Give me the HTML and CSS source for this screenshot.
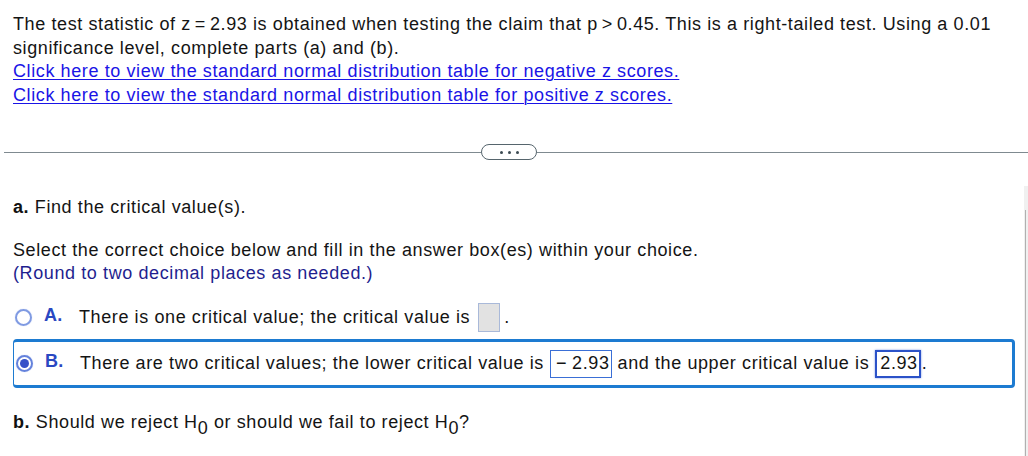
FILE: index.html
```html
<!DOCTYPE html>
<html>
<head>
<meta charset="utf-8">
<link rel="stylesheet" href="styles.css">
</head>
<body>
<div class="page">
  <div class="intro">
    <div class="line">The test statistic of z<span class="op">=</span>2.93 is obtained when testing the claim that p<span class="op">&gt;</span>0.45. This is a right-tailed test. Using a 0.01</div>
    <div class="line">significance level, complete parts (a) and (b).</div>
    <div class="line"><a class="link" href="#">Click here to view the standard normal distribution table for negative z scores.</a></div>
    <div class="line"><a class="link" href="#">Click here to view the standard normal distribution table for positive z scores.</a></div>
  </div>
  <div class="divider">
    <div class="rule rule-left"></div>
    <div class="more"><span class="dot"></span><span class="dot"></span><span class="dot"></span></div>
    <div class="rule rule-right"></div>
  </div>
  <div class="pane">
    <div class="content">
      <div class="part"><b>a.</b> Find the critical value(s).</div>
      <div class="instr">Select the correct choice below and fill in the answer box(es) within your choice.</div>
      <div class="hint">(Round to two decimal places as needed.)</div>
      <div class="option option-a">
        <span class="radio"></span>
        <span class="letter">A.</span>
        <span class="otext">There is one critical value; the critical value is <span class="box box-empty"></span>.</span>
      </div>
      <div class="option option-b">
        <span class="radio radio-on"><span class="radio-dot"></span></span>
        <span class="letter">B.</span>
        <span class="otext">There are two critical values; the lower critical value is <span class="box box-val"><span class="minus">&minus;</span>2.93</span> and the upper critical value is <span class="box box-val box-focus">2.93</span>.</span>
      </div>
      <div class="part partb"><b>b.</b> Should we reject H<sub>0</sub> or should we fail to reject H<sub>0</sub>?</div>
    </div>
    <div class="scrollbar"><div class="thumb"></div></div>
  </div>
</div>
</body>
</html>
```
FILE: styles.css
```css
html, body {
  margin: 0;
  padding: 0;
  background: #ffffff;
}
body {
  font-family: "Liberation Sans", Arial, sans-serif;
  font-size: 18px;
  letter-spacing: 0.6px;
  color: #141414;
  width: 1028px;
  height: 456px;
  overflow: hidden;
}
.intro {
  padding: 12px 0 0 13px;
}
.line {
  line-height: 24px;
  height: 24px;
  white-space: nowrap;
}
.intro .line:nth-child(3) { height: 23px; line-height: 23px; }
.op {
  margin: 0 4px;
}
.link {
  color: #1a14e6;
  text-decoration: underline;
  text-decoration-thickness: 1px;
  text-underline-offset: 2px;
}
.divider {
  display: flex;
  align-items: center;
  margin-top: 37px;
  padding-left: 4px;
  height: 16px;
}
.rule {
  height: 1px;
  background: #7f8a90;
}
.rule-left { width: 477px; }
.rule-right { flex: 1; }
.more {
  width: 54px;
  height: 14px;
  border: 1px solid #56656d;
  border-radius: 8px;
  display: flex;
  align-items: center;
  justify-content: center;
  gap: 5px;
  background: #fff;
}
.dot {
  width: 3px;
  height: 3px;
  border-radius: 50%;
  background: #3c4a52;
}
.pane {
  display: flex;
  margin-top: 26px;
  height: 270px;
}
.content {
  flex: 1;
  padding: 9px 0 0 13px;
}
.scrollbar {
  width: 4px;
  background: #f0f0f0;
  display: flex;
  flex-direction: column;
  justify-content: flex-end;
  padding-top: 24px;
}
.thumb {
  flex: 1;
  margin-left: 1px;
  width: 1px;
  background: #b0b0b0;
}
.part {
  line-height: 24px;
  height: 24px;
}
.part b { font-weight: bold; color: #111; }
.instr {
  margin-top: 19px;
  line-height: 24px;
  height: 23px;
}
.hint {
  line-height: 24px;
  height: 24px;
  color: #1f1f8f;
}
.option {
  display: flex;
  align-items: center;
  white-space: nowrap;
}
.option-a {
  margin-top: 15px;
  height: 34px;
  margin-left: 2px;
}
.option-b {
  margin-top: 5px;
  height: 43px;
  width: 996px;
  border: 3px solid #1d7bd1;
  border-left-width: 1px;
  border-radius: 4px;
  padding-left: 2px;
}
.radio {
  width: 17px;
  height: 17px;
  border: 2px solid #7f9ae2;
  border-radius: 50%;
  box-sizing: border-box;
  display: flex;
  align-items: center;
  justify-content: center;
  box-shadow: 0 0 1px #a9bcef;
  flex: none;
}
.radio-on {
  border-color: #6482dc;
}
.radio-dot {
  width: 9px;
  height: 9px;
  border-radius: 50%;
  background: #3550c8;
}
.letter {
  font-weight: bold;
  color: #2a48c2;
  margin-left: 12px;
  width: 35px;
  font-size: 18px;
  letter-spacing: 0.3px;
  position: relative;
  top: -2px;
}
.otext {
  display: flex;
  align-items: center;
}
.box {
  display: inline-flex;
  align-items: center;
  box-sizing: border-box;
}
.box-empty {
  width: 22px;
  height: 29px;
  background: #e2e2e2;
  border: 1px solid #a9b9d9;
  margin-left: 8px;
  margin-right: 4px;
}
.box-val {
  height: 28px;
  border: 1px solid #3a6fd6;
  padding: 0 1px 0 5px;
  margin-left: 6px;
  margin-right: 6px;
}
.minus {
  margin-right: 5px;
}
.box-focus {
  border: 2px solid #2b52c8;
  box-shadow: 0 0 2px #7e9ae6;
  padding: 0 1px 0 3px;
  margin-right: 1px;
}
.partb {
  margin-top: 22px;
}
sub {
  font-size: 18px;
  vertical-align: -6px;
  line-height: 0;
}
```
